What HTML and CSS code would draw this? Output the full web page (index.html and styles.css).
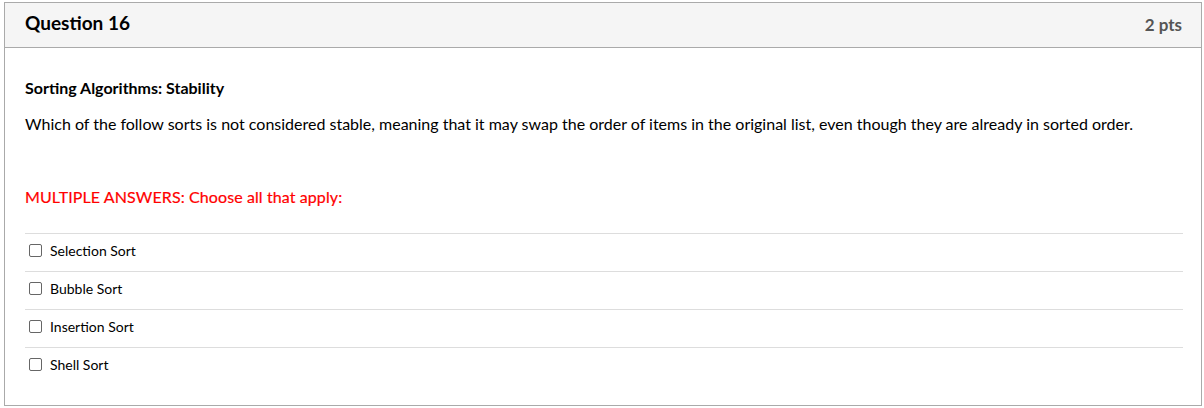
FILE: index.html
```html
<!DOCTYPE html>
<html>
<head>
<meta charset="utf-8">
<link rel="stylesheet" href="styles.css">
</head>
<body>
<div class="question">
  <div class="header">
    <h2 class="title">Question 16</h2>
    <span class="pts">2 pts</span>
  </div>
  <div class="content">
    <p class="subtitle">Sorting Algorithms: Stability</p>
    <p class="text">Which of the follow sorts is not considered stable, meaning that it may swap the order of items in the original list, even though they are already in sorted order.</p>
    <p class="instr">MULTIPLE ANSWERS: Choose all that apply:</p>
    <div class="answers">
      <label class="answer"><span class="box"></span><span>Selection Sort</span></label>
      <label class="answer"><span class="box"></span><span>Bubble Sort</span></label>
      <label class="answer"><span class="box"></span><span>Insertion Sort</span></label>
      <label class="answer"><span class="box"></span><span>Shell Sort</span></label>
    </div>
  </div>
</div>
</body>
</html>
```
FILE: styles.css
```css
* { box-sizing: border-box; }
html, body { margin: 0; padding: 0; background: #fff; }
body {
  font-family: Lato, "Liberation Sans", sans-serif;
  color: #000;
  padding: 2px 3px 0 4px;
}
.question {
  border: 1px solid #aaaaaa;
  width: 1198px;
  height: 404px;
}
.header {
  display: flex;
  align-items: center;
  justify-content: space-between;
  background: #f5f5f5;
  border-bottom: 1px solid #aaaaaa;
  height: 45px;
  padding: 0 19px 4px 20px;
}
.title {
  margin: 0;
  font-size: 19px;
  line-height: 24px;
  font-weight: 700;
  color: #000;
}
.pts {
  font-size: 17px;
  line-height: 24px;
  font-weight: 700;
  color: #555;
  padding-top: 3px;
}
.content {
  padding: 30px 18px 0 20px;
}
.subtitle {
  margin: 0;
  font-size: 16px;
  font-weight: 700;
  line-height: 20px;
}
.text {
  margin: 16px 0 0 0;
  font-size: 16px;
  line-height: 20px;
}
.instr {
  margin: 53px 0 0 0;
  font-size: 16px;
  color: #ff0000;
  line-height: 20px;
  letter-spacing: 0.1px;
  -webkit-text-stroke: 0.2px #ff0000;
}
.answers {
  margin-top: 26px;
}
.answer {
  display: flex;
  align-items: center;
  gap: 8px;
  height: 38px;
  border-top: 1px solid #dddddd;
  font-size: 14px;
  padding-left: 4px;
  padding-bottom: 5px;
}
.box {
  width: 13px;
  height: 13px;
  border: 1px solid #666;
  border-radius: 2px;
  background: #fff;
}
```
